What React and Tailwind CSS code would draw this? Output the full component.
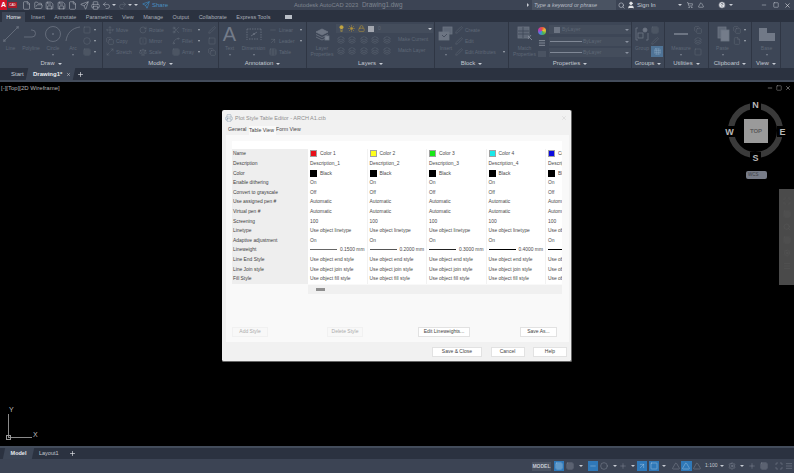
import React from "react";
import {
  Minus, Square, Move, RotateCw, Scissors, Pen, Copy, FlipHorizontal, Spline, Maximize2, Scale, Grid3x3, Sun, Lock, Search, User, ShoppingCart, X, Plus, Settings, Menu, Save, File, FolderOpen, Printer, Undo2, Redo2, Send, HelpCircle, Table, ArrowUpRight, Lightbulb, Layers, Circle, Triangle, Maximize,
} from "lucide-react";

const font = "font-['Liberation_Sans',Arial,sans-serif]";
const dim = "#6d7583";

function Caret({ color = "border-t-[#c7ccd4]", tight }) {
  return <span className={`inline-block w-0 h-0 border-x-[2px] border-x-transparent border-t-[2px] align-middle shrink-0 ${tight ? "ml-px" : "ml-[3px]"} ${color}`} />;
}

const S = ({ size = 16, children }) => (
  <svg width={size} height={size} viewBox="0 0 16 16" fill="none" stroke={dim} strokeWidth="0.8">{children}</svg>
);
const LineI = () => <S><path d="M1 15 15 1" /><rect x="0" y="14" width="2" height="2" /><rect x="14" y="0" width="2" height="2" /></S>;
const PolyI = () => <S><path d="M1 11h8a3.5 3.5 0 0 0 0-7" /><path d="M9 4h-1" /></S>;
const CircleI = () => <S><circle cx="8" cy="8" r="7.5" /><path d="M7 8h2M8 7v2" /></S>;
const ArcI = () => <S><path d="M1 15C2 7 7 2 15 1" /></S>;
const TextI = () => <span className="text-[20px] leading-[18px] text-[#737b89] font-normal">A</span>;
const DimI = () => <S><path d="M1 3h14M1 3v11M15 3v11M3 13h10" strokeDasharray="1.5 1" /><path d="M5 10l6-4" /><circle cx="8" cy="8" r="0.7" /></S>;
const LayerI = () => <S><path d="M2 6l6-3 6 3-6 3z" fill="#6d7583" /><path d="M2 8.5l6 3 6-3M2 11l6 3 6-3" /><rect x="11" y="10" width="4" height="4" fill="#7d8593" /></S>;
const BlockI = () => <S><rect x="5" y="1" width="9" height="7" fill="#5f6877" /><rect x="1" y="6" width="10" height="8" fill="#6d7583" /><path d="M4 9l2 2 3-3" stroke="#3d4656" /></S>;
const MatchI = () => <S><rect x="1" y="1" width="11" height="11" fill="#5f6877" /><path d="M1 5h11M1 8h11M6 1v11" stroke="#3d4656" /><path d="M11 10l4 4M14 9l-3 4" stroke="#8a92a0" /></S>;
const GroupI = () => <S><path d="M2 2h2M2 2v12M2 14h2M12 14h2M14 14V7" /><circle cx="11" cy="4" r="2" fill="#6d7583" /><rect x="4" y="7" width="5" height="5" /></S>;
const MeasureI = () => <span className="block w-[14px] h-[2.5px] bg-[#6d7583] my-[7px]" />;
const PasteI = () => <S><rect x="3" y="1" width="8" height="11" fill="#5f6877" /><rect x="6" y="4" width="8" height="11" fill="#747c8a" /></S>;
const BaseI = () => <svg width="16" height="13" viewBox="0 0 16 13" fill="#717987"><path d="M0 0h8v5h8v8H0z" /></svg>;

function Big({ icon: I, label, w = 24, caret, top = 2 }) {
  return (
    <div className="flex flex-col items-center shrink-0" style={{ width: w, paddingTop: top }}>
      <div className="h-[18px] flex items-center justify-center"><I /></div>
      <span className="mt-[2px] text-[5px] leading-[6px] text-[#5f6877] text-center whitespace-pre-line">{label}</span>
      {caret && <span className="mt-[3px] w-0 h-0 border-x-[1.5px] border-x-transparent border-t-[2px] border-t-[#7d8593]" />}
    </div>
  );
}

function Small({ icon: I, label, w = 33, caret }) {
  return (
    <div className="flex items-center gap-[2px] h-[11px] shrink-0" style={{ width: w }}>
      <I size={8} strokeWidth={1} className="text-[#747c8a] shrink-0" />
      {label && <span className="text-[5px] leading-[6px] text-[#5f6877] whitespace-nowrap">{label}</span>}
      {caret && <span className="ml-auto mr-[2px] w-0 h-0 border-x-[1.5px] border-x-transparent border-t-[2px] border-t-[#a8aeb8]" />}
    </div>
  );
}

function Panel({ title, w, children, pl = 2 }) {
  return (
    <div className="flex flex-col border-r border-[#2f3644] shrink-0" style={{ width: w }}>
      <div className="flex h-[37px] overflow-hidden pt-[1px]" style={{ paddingLeft: pl }}>{children}</div>
      <div className="h-[9px] flex items-center justify-center text-[6px] leading-[9px] text-[#c3c8d0]">
        {title}<Caret />
      </div>
    </div>
  );
}

function Col({ children, w }) {
  return <div className="flex flex-col pt-[1px] shrink-0" style={{ width: w }}>{children}</div>;
}

function DropBar({ label, line = true }) {
  return (
    <div className="h-[9px] w-[82px] bg-[#444d5c] flex items-center gap-[1px] pl-[1px] pr-[2px] mb-[2px]">
      {line && <span className="w-[32px] h-px bg-[#808896]" />}
      {!line && <span className="w-[6px] h-[6px] bg-[#6d7583] mr-[1px] ml-[4px]" />}
      <span className="text-[5px] text-[#5f6877]">{label}</span>
      <span className="ml-auto"><Caret color="border-t-[#8a92a0]" /></span>
    </div>
  );
}

const qat = [File, FolderOpen, Save, Save, File, Send, Printer];
const tabs = ["Insert", "Annotate", "Parametric", "View", "Manage", "Output", "Collaborate", "Express Tools"];

const rows = [
  ["Name", "name"],
  ["Description", "desc"],
  ["Color", "color"],
  ["Enable dithering", "On"],
  ["Convert to grayscale", "Off"],
  ["Use assigned pen #", "Automatic"],
  ["Virtual pen #", "Automatic"],
  ["Screening", "100"],
  ["Linetype", "Use object linetype"],
  ["Adaptive adjustment", "On"],
  ["Lineweight", "lw"],
  ["Line End Style", "Use object end style"],
  ["Line Join style", "Use object join style"],
  ["Fill Style", "Use object fill style"],
];

const styles = [
  { n: 1, c: "bg-[#e8101a]", lw: "0.1500 mm", h: "h-px bg-[#666]" },
  { n: 2, c: "bg-[#ffff1a]", lw: "0.2000 mm", h: "h-px bg-[#555]" },
  { n: 3, c: "bg-[#17e817]", lw: "0.3000 mm", h: "h-px bg-[#222]" },
  { n: 4, c: "bg-[#19e8e8]", lw: "0.4000 mm", h: "h-px bg-[#000]" },
  { n: 5, c: "bg-[#0b0be0]", lw: "", h: "h-px bg-[#000]" },
];

function Cell({ kind, s }) {
  if (kind === "name")
    return (
      <div className="flex items-center gap-[3px]">
        <span className={`w-[7px] h-[7px] border border-[#a0a0a0] shrink-0 ${s.c}`} />
        <span>Color {s.n}</span>
      </div>
    );
  if (kind === "desc") return <span>Description_{s.n}</span>;
  if (kind === "color")
    return (
      <div className="flex items-center gap-[3px]">
        <span className="w-[7px] h-[7px] bg-black shrink-0" />
        <span>Black</span>
      </div>
    );
  if (kind === "lw")
    return (
      <div className="flex items-center gap-[3px]">
        <span className={`w-[27px] shrink-0 ${s.h}`} />
        <span>{s.lw}</span>
      </div>
    );
  return <span>{kind}</span>;
}

function Btn({ children, w, disabled }) {
  return (
    <div
      className={`h-[10px] flex items-center justify-center text-[5px] border shrink-0 ${disabled ? "text-[#ababab] border-[#f1f1f1] bg-[#f8f8f8]" : "text-[#444] border-[#e2e2e2] bg-white"}`}
      style={{ width: w }}
    >
      {children}
    </div>
  );
}

function Dialog() {
  return (
    <div className="absolute left-[222px] top-[28px] w-[350px] h-[252px] bg-[#f1f1f1] rounded-[2px] flex flex-col border-r border-b border-[#666]">
      <div className="h-[16px] flex items-center pl-[3px] gap-[2px] text-[5.5px] text-[#8f8f8f] shrink-0">
        <Printer size={8} strokeWidth={1} className="text-[#5a7896]" />
        <span className="flex-1">Plot Style Table Editor - ARCH A1.ctb</span>
        <X size={6} strokeWidth={1} className="text-[#aaa] mr-[4px]" />
      </div>
      <div className="h-[9px] flex items-end text-[5.2px] text-[#444] pl-[6px] shrink-0">
        <span className="mb-[1px] w-[21px]">General</span>
        <span className="bg-[#f9f9f9] h-[9px] w-[27px] leading-[8px]">Table View</span>
        <span className="mb-[1px]">Form View</span>
      </div>
      <div className="h-[207px] bg-[#f9f9f9] ml-[4px] mr-[2px] pt-[6px] pl-[6px] flex flex-col shrink-0">
        <div className="flex flex-col overflow-hidden shrink-0">
          <div className="h-[8px] shrink-0 bg-white w-[330px]" />
          {rows.map(([label, kind]) => (
            <div key={label} className="h-[9.62px] flex items-center text-[4.9px] leading-[9px] text-[#4a4a4a] shrink-0 overflow-hidden whitespace-nowrap">
              <div className="w-[76px] h-full bg-[#eeeeee] pl-[1px] flex items-center text-[#3d3d3d] shrink-0">{label}</div>
              {styles.map((s, i) => (
                <div key={s.n} className={`h-full flex items-center pl-[2px] bg-white overflow-hidden shrink-0 border-r border-[#f2f2f2] ${i === 4 ? "w-[16px] border-r-0" : "w-[59.5px]"}`}>
                  <Cell kind={kind} s={s} />
                </div>
              ))}
            </div>
          ))}
        </div>
        <div className="h-[9px] mt-[1px] ml-[76px] w-[254px] bg-[#f0f0f0] flex items-center pl-[8px] shrink-0">
          <span className="w-[9px] h-[3px] bg-[#8f8f8f]" />
        </div>
        <div className="flex-1 flex items-end pb-[5px]">
          <Btn w={36} disabled>Add Style</Btn>
          <span className="w-[59px]" />
          <Btn w={36} disabled>Delete Style</Btn>
          <span className="w-[55px]" />
          <Btn w={52}>Edit Lineweights...</Btn>
          <span className="w-[50px]" />
          <Btn w={37}>Save As...</Btn>
        </div>
      </div>
      <div className="flex-1 flex items-center justify-end gap-[8.5px] pr-[4px]">
        <Btn w={50}>Save &amp; Close</Btn>
        <Btn w={34}>Cancel</Btn>
        <Btn w={34}>Help</Btn>
      </div>
    </div>
  );
}

function ViewCube() {
  const letter = "absolute w-[11px] h-[11px] bg-black flex items-center justify-center text-[9px] leading-[10px]";
  return (
    <div className="absolute left-[724px] top-[20px] w-[64px] h-[80px] text-[#b8b8b8] font-bold">
      <div className="absolute left-[4px] top-[1px] w-[55px] h-[55px] rounded-full border-[6px] border-[#3a3a3a]" />
      <div className="absolute left-[20px] top-[17px] w-[24px] h-[24px] bg-[#9a9a9a] flex items-center justify-center text-[6px] text-[#5c5c5c]">TOP</div>
      <span className={`${letter} left-[26px] top-[-3px]`}>N</span>
      <span className={`${letter} left-[26px] top-[50px]`}>S</span>
      <span className={`${letter} left-[0px] top-[24px]`}>W</span>
      <span className={`${letter} left-[53px] top-[24px]`}>E</span>
      <span className="absolute left-[22px] top-[69px] w-[21px] h-[8px] rounded-[2px] bg-[#777c88] text-[#3d3f46] text-[4.5px] leading-[8px] pl-[2px] font-normal">WCS</span>
    </div>
  );
}

function StatusIcon({ icon: I, on, size = 8, w = 10 }) {
  return (
    <span className={`h-[10px] flex items-center justify-center shrink-0 ${on ? "bg-[#2f78b8] text-[#d5e6f5]" : "text-[#a8aeb8]"}`} style={{ width: w }}>
      <I size={size} strokeWidth={1} />
    </span>
  );
}

export default function App() {
  return (
    <div className={`${font} w-[794px] h-[473px] overflow-hidden bg-black flex flex-col`}>
      {/* title bar */}
      <div className="h-[10px] bg-[#3c4454] flex items-center shrink-0 text-[6px] text-[#9aa0aa]">
        <div className="w-[294px] flex items-center shrink-0">
          <span className="w-[7px] h-[10px] bg-[#d3132a] text-white text-[7px] font-bold leading-[10px] text-center">A</span>
          <span className="w-[9px] h-[6px] ml-px bg-[#a81c2c] text-white text-[3px] leading-[6px] text-center mr-[5px]">CAD</span>
          <div className="flex items-center gap-[2.5px] text-[#c7ccd4]">
            {qat.map((I, i) => <I key={i} size={9} strokeWidth={1.25} />)}
          </div>
          <Undo2 size={9} className="ml-[2px] text-[#c7ccd4]" strokeWidth={1.25} />
          <Caret tight />
          <Redo2 size={9} className="ml-[2px] text-[#6d7583]" strokeWidth={1.25} />
          <Caret tight />
          <span className="w-px" />
          <Caret tight />
          <Send size={8} className="ml-[4px] text-[#3e9fe0]" strokeWidth={1.5} />
          <span className="ml-[2px] text-[#4a8fc2]">Share</span>
        </div>
        <span className="text-[#7f8590] text-[5.8px] whitespace-nowrap w-[68px] shrink-0">Autodesk AutoCAD 2023</span>
        <span className="text-[#7f8590] text-[6.4px] whitespace-nowrap w-[165px] shrink-0">Drawing1.dwg</span>
        <span className="w-0 h-0 border-y-[2px] border-y-transparent border-l-[2px] border-l-[#c7ccd4] shrink-0" />
        <div className="ml-[3px] w-[84px] h-[10px] bg-[#4a5362] pl-[2px] text-[5.5px] leading-[10px] italic text-[#b9bec6] shrink-0">Type a keyword or phrase</div>
        <Search size={7} className="ml-[2px] text-[#c7ccd4] shrink-0" />
        <User size={8} className="ml-[2px] text-[#e3e5e9] shrink-0" fill="#e3e5e9" />
        <span className="ml-[2px] text-[#c7ccd4] w-[38px] shrink-0 whitespace-nowrap">Sign In</span>
        <Caret />
        <ShoppingCart size={6} className="ml-[5px] text-[#c7ccd4] shrink-0" />
        <Triangle size={6} className="ml-[5px] text-[#c7ccd4] shrink-0" />
        <HelpCircle size={8} className="ml-[14px] text-[#e3e5e9] shrink-0" fill="#e3e5e9" stroke="#3c4454" />
        <Caret />
        <Minus size={6} className="ml-[28px] text-[#c7ccd4] shrink-0" />
        <Square size={6} className="ml-[6px] text-[#c7ccd4] shrink-0" />
        <X size={7} className="ml-[5px] text-[#e3e5e9] shrink-0" />
      </div>

      {/* ribbon tabs */}
      <div className="h-[12px] bg-[#2b3240] flex items-end shrink-0 text-[5.5px] leading-[9px] text-[#a8aeb8]">
        <span className="ml-[2px] w-[23px] h-[10px] bg-[#3d4656] text-[#e8eaee] text-center leading-[10px]">Home</span>
        <div className="flex gap-[9.5px] ml-[6px] h-[10px] items-center whitespace-nowrap">
          {tabs.map((t) => <span key={t}>{t}</span>)}
          <span className="w-[7px] h-[4px] bg-[#b9bec6] ml-[5px]" />
        </div>
      </div>

      {/* ribbon */}
      <div className="h-[46px] bg-[#3d4656] flex shrink-0 overflow-hidden">
        <Panel title="Draw" w={103}>
          <Big icon={LineI} label="Line" w={17} />
          <Big icon={PolyI} label="Polyline" w={24} />
          <Big icon={CircleI} label="Circle" w={20} caret />
          <Big icon={ArcI} label="Arc" w={20} caret />
          <Col w={15}><Small icon={Square} w={15} caret /><Small icon={Circle} w={15} caret /><Small icon={Grid3x3} w={15} caret /></Col>
        </Panel>
        <Panel title="Modify" w={116} pl={3}>
          <Col w={33}><Small icon={Move} label="Move" /><Small icon={Copy} label="Copy" /><Small icon={Maximize2} label="Stretch" /></Col>
          <Col w={33}><Small icon={RotateCw} label="Rotate" /><Small icon={FlipHorizontal} label="Mirror" /><Small icon={Scale} label="Scale" /></Col>
          <Col w={36}><Small icon={Scissors} label="Trim" w={30} caret /><Small icon={Spline} label="Fillet" w={30} caret /><Small icon={Grid3x3} label="Array" w={30} caret /></Col>
          <Col w={10}><Small icon={Pen} w={10} /><Small icon={Square} w={10} /><Small icon={Copy} w={10} /></Col>
        </Panel>
        <Panel title="Annotation" w={88}>
          <Big icon={TextI} label="Text" w={17} caret />
          <Big icon={DimI} label="Dimension" w={31} caret />
          <Col w={36}><Small icon={Minus} label="Linear" w={35} caret /><Small icon={ArrowUpRight} label="Leader" w={35} caret /><Small icon={Table} label="Table" w={35} /></Col>
        </Panel>
        <Panel title="Layers" w={128}>
          <Big icon={LayerI} label={"Layer\nProperties"} w={26} />
          <div className="flex flex-col ml-[1px] pt-[1px] w-[97px]">
            <div className="h-[9px] bg-[#444d5c] flex items-center gap-[3px] pl-[2px] mb-[1px]">
              <Lightbulb size={7} className="text-[#c2a542]" fill="#c2a542" />
              <Sun size={7} className="text-[#b0913a]" fill="#b0913a" />
              <Lock size={7} className="text-[#b0913a]" />
              <span className="w-[6px] h-[6px] bg-[#a3a7af]" />
              <span className="text-[5px] text-[#5f6877] ml-[1px]">0</span>
              <span className="ml-auto mr-[1px]"><Caret /></span>
            </div>
            {["Make Current", "Match Layer"].map((t) => (
              <div key={t} className="flex h-[11px] items-center gap-[3.4px] text-[#747c8a] pl-[1px]">
                {[0, 1, 2, 3, 4].map((i) => <Layers key={i} size={8} strokeWidth={1} className="shrink-0" />)}
                <span className="text-[5px] text-[#5f6877] ml-[4px] whitespace-nowrap">{t}</span>
              </div>
            ))}
          </div>
        </Panel>
        <Panel title="Block" w={74}>
          <Big icon={BlockI} label="Insert" w={18} caret />
          <Col w={52}><Small icon={Pen} label="Create" w={52} /><Small icon={Pen} label="Edit" w={52} /><Small icon={Pen} label="Edit Attributes" w={52} caret /></Col>
        </Panel>
        <Panel title="Properties" w={123}>
          <Big icon={MatchI} label={"Match\nProperties"} w={27} />
          <div className="flex flex-col pt-[2px]">
            <div className="flex items-center gap-[3px] mb-[1px]">
              <span className="w-[8px] h-[8px] rounded-full shrink-0 bg-[conic-gradient(#e8503a,#e8c03a,#4ab84a,#3a8ae8,#b83ab8,#e8503a)]" />
              <DropBar label="ByLayer" line={false} />
            </div>
            <div className="flex items-center gap-[3px]">
              <Menu size={8} className="text-[#a8aeb8] shrink-0" /><DropBar label="ByLayer" />
            </div>
            <div className="flex items-center gap-[3px]">
              <span className="w-[8px] h-[6px] bg-[#4a5362] shrink-0" /><DropBar label="ByLayer" />
            </div>
          </div>
        </Panel>
        <Panel title="Groups" w={33} pl={1}>
          <Big icon={GroupI} label="Group" w={18} />
          <Col w={13}><Small icon={Grid3x3} w={12} /><Small icon={Pen} w={12} /><div className="w-[12px] h-[11px] bg-[#4f7396] flex items-center justify-center text-[#a8c4dc]"><Grid3x3 size={7} strokeWidth={1} /></div></Col>
        </Panel>
        <Panel title="Utilities" w={44} pl={3}>
          <Big icon={MeasureI} label="Measure" w={26} caret />
          <Col w={12}><Small icon={Copy} w={12} /><Small icon={Layers} w={12} /><Small icon={Square} w={12} /></Col>
        </Panel>
        <Panel title="Clipboard" w={43} pl={3}>
          <Big icon={PasteI} label="Paste" w={21} caret />
          <Col w={15}><Small icon={Copy} w={15} caret /><Small icon={File} w={15} caret /></Col>
        </Panel>
        <Panel title="View" w={29}>
          <Big icon={BaseI} label="Base" w={25} caret />
        </Panel>
      </div>

      {/* file tabs */}
      <div className="h-[14px] bg-[#2b3240] border-b-[2px] border-[#434c5b] flex items-center shrink-0 text-[6px] text-[#c3c8d0]">
        <span className="ml-[11px] w-[12px]">Start</span>
        <span className="ml-[4px] h-[12px] w-[47px] bg-[#3d4656] -skew-x-12 shrink-0" >
          <span className="skew-x-12 font-bold text-[#e8eaee] leading-[12px] pl-[6px] flex items-center gap-[4px] whitespace-nowrap">Drawing1*<X size={5} /></span>
        </span>
        <Plus size={7} className="ml-[3px] text-[#e3e5e9]" strokeWidth={2.25} />
      </div>

      {/* canvas */}
      <div className="flex-1 relative bg-black">
        <div className="absolute left-[1px] top-[2px] text-[6px] leading-[8px] text-[#b5b5b5]">[-][Top][2D Wireframe]</div>
        <div className="absolute left-[767px] top-[3px] flex items-center gap-[3px] text-[#c7c7c7]">
          <Minus size={6} strokeWidth={2} /><Square size={6} strokeWidth={1.5} /><X size={6} strokeWidth={2} />
        </div>
        <ViewCube />
        <div className="absolute left-[779px] top-[107px] w-[15px] h-[96px] bg-[#4a4a4a] flex flex-col items-center gap-[5px] pt-[8px] text-[#5f5f5f]">
          {[Maximize, Grid3x3, Search, Grid3x3, Settings, Menu].map((I, i) => <I key={i} size={8} strokeWidth={1} />)}
        </div>
        <Dialog />
        {/* UCS icon */}
        <div className="absolute left-[6px] top-[324px] w-[36px] h-[36px] text-[#bdbdbd] text-[7px] leading-[8px]">
          <span className="absolute left-[3px] top-0">Y</span>
          <span className="absolute left-[2px] top-[8px] w-px h-[23px] bg-[#8a8a8a]" />
          <span className="absolute left-[2px] top-[31px] w-[24px] h-px bg-[#8a8a8a]" />
          <span className="absolute left-0 top-[29px] w-[5px] h-[5px] border border-[#9a9a9a]" />
          <span className="absolute left-[27px] top-[25px]">X</span>
        </div>
      </div>

      {/* layout tabs */}
      <div className="h-[13px] bg-[#2b3240] border-t-[2px] border-[#434c5b] flex items-center shrink-0 text-[5.5px] text-[#c3c8d0]">
        <span className="ml-[4px] h-[11px] w-[29px] bg-[#3d4656] -skew-x-12 shrink-0">
          <span className="block skew-x-12 font-bold text-[#e8eaee] leading-[11px] text-center">Model</span>
        </span>
        <span className="ml-[6px] w-[30px]">Layout1</span>
        <Plus size={7} className="text-[#e3e5e9]" strokeWidth={2.25} />
      </div>

      {/* status bar */}
      <div className="h-[14px] bg-[#3c4454] flex items-center shrink-0 text-[#c3c8d0] pl-[532px]">
        <span className="text-[5px] font-bold bg-[#4a5362] w-[20px] text-center leading-[9px] mr-[3px]">MODEL</span>
        <StatusIcon icon={Grid3x3} on />
        <StatusIcon icon={Grid3x3} w={12} /><Caret />
        <span className="w-[5px]" />
        <StatusIcon icon={Minus} on />
        <StatusIcon icon={Circle} w={12} /><Caret />
        <span className="w-[2px]" />
        <StatusIcon icon={Plus} w={10} /><Caret />
        <span className="w-[2px]" />
        <StatusIcon icon={ArrowUpRight} on />
        <span className="w-[2px]" />
        <StatusIcon icon={Square} on /><Caret />
        <span className="w-[5px]" />
        <StatusIcon icon={Triangle} />
        <StatusIcon icon={Triangle} on w={11} />
        <StatusIcon icon={Triangle} w={11} />
        <span className="text-[5px] ml-[2px]">1:100</span><Caret />
        <span className="w-[3px]" />
        <StatusIcon icon={Settings} /><Caret />
        <span className="w-[2px]" />
        <StatusIcon icon={Plus} w={11} />
        <StatusIcon icon={Grid3x3} w={14} />
        <span className="w-[3px]" />
        <StatusIcon icon={Maximize} />
        <StatusIcon icon={Menu} />
      </div>
    </div>
  );
}
